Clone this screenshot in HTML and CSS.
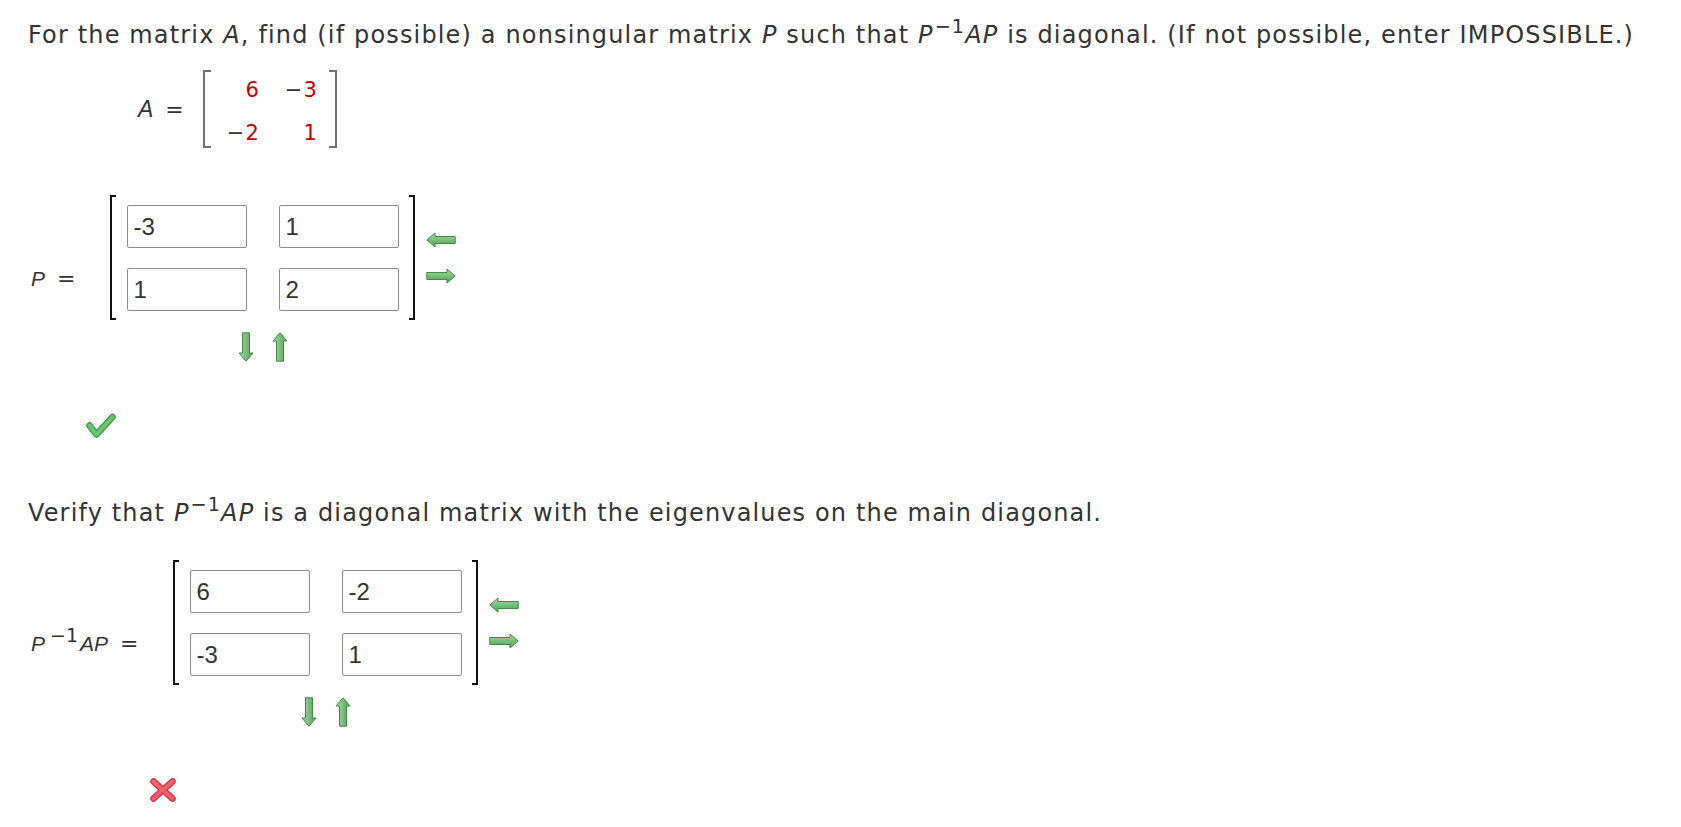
FILE: index.html
```html
<!DOCTYPE html>
<html>
<head>
<meta charset="utf-8">
<link rel="stylesheet" href="styles.css">
</head>
<body>
<div class="page">
  <p class="line intro">For the matrix <span class="mi">A</span>, find (if possible) a nonsingular matrix <span class="mi">P</span> such that <span class="mi">P</span><span class="sup">−1</span><span class="mi">AP</span> is diagonal. (If not possible, enter IMPOSSIBLE.)</p>

  <div class="given">
    <div class="glabel"><span class="lmi">A</span><span class="eq">=</span></div>
    <div class="amat">
      <span class="abrk abrk-l"></span>
      <div class="agrid">
        <span class="ae">6</span><span class="ae"><span class="neg">−</span>3</span>
        <span class="ae"><span class="neg">−</span>2</span><span class="ae">1</span>
      </div>
      <span class="abrk abrk-r"></span>
    </div>
  </div>

  <section class="answer ans-p">
    <div class="mlabel"><span class="lmi">P</span><span class="eq">=</span></div>
    <div class="mat">
      <span class="brk brk-l"></span>
      <div class="mgrid">
        <input class="cell" type="text" value="-3" readonly>
        <input class="cell" type="text" value="1" readonly>
        <input class="cell" type="text" value="1" readonly>
        <input class="cell" type="text" value="2" readonly>
      </div>
      <span class="brk brk-r"></span>
    </div>
    <div class="row-ops">
      <svg class="harrow" width="30" height="16" viewBox="0 0 30 16"><defs><linearGradient id="gh1" x1="0" y1="0" x2="0" y2="1"><stop offset="0" stop-color="#a6dca6"/><stop offset="1" stop-color="#4f9f52"/></linearGradient></defs><path d="M0.8 8 L9 1 L9 4.5 L29.2 4.5 L29.2 11.5 L9 11.5 L9 15 Z" fill="url(#gh1)" stroke="#3f8a44" stroke-width="1"/></svg>
      <svg class="harrow" width="30" height="16" viewBox="0 0 30 16"><path d="M29.2 8 L21 1 L21 4.5 L0.8 4.5 L0.8 11.5 L21 11.5 L21 15 Z" fill="url(#gh1)" stroke="#3f8a44" stroke-width="1"/></svg>
    </div>
    <div class="col-ops">
      <svg class="varrow" width="16" height="30" viewBox="0 0 16 30"><defs><linearGradient id="gv1" x1="0" y1="0" x2="1" y2="0"><stop offset="0" stop-color="#a6dca6"/><stop offset="1" stop-color="#4f9f52"/></linearGradient></defs><path d="M8 29.2 L1 21 L4.5 21 L4.5 0.8 L11.5 0.8 L11.5 21 L15 21 Z" fill="url(#gv1)" stroke="#3f8a44" stroke-width="1"/></svg>
      <svg class="varrow" width="16" height="30" viewBox="0 0 16 30"><path d="M8 0.8 L1 9 L4.5 9 L4.5 29.2 L11.5 29.2 L11.5 9 L15 9 Z" fill="url(#gv1)" stroke="#3f8a44" stroke-width="1"/></svg>
    </div>
    <div class="mark mark-ok">
      <svg width="30" height="26" viewBox="0 0 30 26"><path d="M3.5 12.5 L10.5 21.5 L26.5 4" fill="none" stroke="#3f9a45" stroke-width="6.5" stroke-linecap="round" stroke-linejoin="round"/><path d="M3.5 12.5 L10.5 21.5 L26.5 4" fill="none" stroke="#6cc46f" stroke-width="4" stroke-linecap="round" stroke-linejoin="round"/></svg>
    </div>
  </section>

  <p class="line verify">Verify that <span class="mi">P</span><span class="sup">−1</span><span class="mi">AP</span> is a diagonal matrix with the eigenvalues on the main diagonal.</p>

  <section class="answer ans-d">
    <div class="mlabel"><span class="lmi">P</span><span class="lsup">−1</span><span class="lmi">AP</span><span class="eq">=</span></div>
    <div class="mat">
      <span class="brk brk-l"></span>
      <div class="mgrid">
        <input class="cell" type="text" value="6" readonly>
        <input class="cell" type="text" value="-2" readonly>
        <input class="cell" type="text" value="-3" readonly>
        <input class="cell" type="text" value="1" readonly>
      </div>
      <span class="brk brk-r"></span>
    </div>
    <div class="row-ops">
      <svg class="harrow" width="30" height="16" viewBox="0 0 30 16"><path d="M0.8 8 L9 1 L9 4.5 L29.2 4.5 L29.2 11.5 L9 11.5 L9 15 Z" fill="url(#gh1)" stroke="#3f8a44" stroke-width="1"/></svg>
      <svg class="harrow" width="30" height="16" viewBox="0 0 30 16"><path d="M29.2 8 L21 1 L21 4.5 L0.8 4.5 L0.8 11.5 L21 11.5 L21 15 Z" fill="url(#gh1)" stroke="#3f8a44" stroke-width="1"/></svg>
    </div>
    <div class="col-ops">
      <svg class="varrow" width="16" height="30" viewBox="0 0 16 30"><path d="M8 29.2 L1 21 L4.5 21 L4.5 0.8 L11.5 0.8 L11.5 21 L15 21 Z" fill="url(#gv1)" stroke="#3f8a44" stroke-width="1"/></svg>
      <svg class="varrow" width="16" height="30" viewBox="0 0 16 30"><path d="M8 0.8 L1 9 L4.5 9 L4.5 29.2 L11.5 29.2 L11.5 9 L15 9 Z" fill="url(#gv1)" stroke="#3f8a44" stroke-width="1"/></svg>
    </div>
    <div class="mark mark-bad">
      <svg width="28" height="26" viewBox="0 0 28 26"><path d="M4.5 4.5 L23.5 21.5 M23.5 4.5 L4.5 21.5" fill="none" stroke="#d8343f" stroke-width="6.5" stroke-linecap="round"/><path d="M4.5 4.5 L23.5 21.5 M23.5 4.5 L4.5 21.5" fill="none" stroke="#f0606a" stroke-width="4" stroke-linecap="round"/></svg>
    </div>
  </section>
</div>
</body>
</html>
```

FILE: styles.css
```css
html, body {
  margin: 0;
  padding: 0;
  background: #ffffff;
}

.page {
  padding: 21px 0 0 28px;
  font-family: "DejaVu Sans", Verdana, sans-serif;
  color: #333333;
}

.line {
  margin: 0;
  font-size: 24px;
  line-height: 28px;
  letter-spacing: 1.15px;
  white-space: nowrap;
}

.mi {
  font-style: oblique;
}

.sup {
  font-size: 0.8em;
  position: relative;
  top: -0.5em;
  line-height: 0;
  margin-left: 1px;
}

/* Given matrix A */
.given {
  display: flex;
  align-items: center;
  margin-top: 21px;
  margin-left: 110px;
}

.glabel {
  display: flex;
  align-items: center;
  font-family: "Liberation Sans", Arial, sans-serif;
  font-size: 23px;
  color: #333333;
  margin-right: 19px;
}

.lmi {
  font-style: italic;
}

.eq {
  margin-left: 12px;
  font-family: "DejaVu Sans", Verdana, sans-serif;
  font-size: 22px;
  font-style: normal;
}

.amat {
  display: flex;
  align-items: stretch;
  height: 78px;
}

.abrk {
  width: 6px;
  border: 2px solid #707070;
}

.abrk-l { border-right: none; }
.abrk-r { border-left: none; }

.agrid {
  display: grid;
  grid-template-columns: 40px 40px;
  grid-auto-rows: 30px;
  column-gap: 18px;
  row-gap: 13px;
  padding: 5px 12px 0 8px;
  font-family: "DejaVu Sans", Verdana, sans-serif;
  font-size: 21px;
  line-height: 30px;
  color: #cc0000;
}

.ae {
  text-align: right;
}

.neg {
  color: #333333;
  margin-right: 1px;
}

/* Answer matrices */
.answer {
  display: grid;
  grid-template-columns: auto auto auto 1fr;
  align-items: center;
}

.ans-p { margin-top: 47px; }
.ans-d { margin-top: 33px; }

.mlabel {
  grid-row: 1 / 3;
  grid-column: 1;
  align-self: center;
  display: flex;
  align-items: baseline;
  font-family: "Liberation Sans", Arial, sans-serif;
  font-size: 21px;
  color: #333333;
  padding-left: 3px;
  margin-right: 35px;
}

.lsup {
  font-family: "DejaVu Sans", Verdana, sans-serif;
  font-size: 19px;
  position: relative;
  top: -0.5em;
  margin-left: 5px;
  margin-right: 2px;
}

.mat {
  grid-row: 1;
  grid-column: 2;
  display: flex;
  align-items: stretch;
}

.brk {
  width: 4px;
  border: 2px solid #111111;
}

.brk-l { border-right: none; }
.brk-r { border-left: none; }

.mgrid {
  display: grid;
  grid-template-columns: 120px 120px;
  column-gap: 32px;
  row-gap: 20px;
  padding: 10px 10px 9px 11px;
}

.cell {
  box-sizing: border-box;
  width: 120px;
  height: 43px;
  margin: 0;
  padding: 0 5px;
  border: 1px solid #8c8c8c;
  border-radius: 2px;
  font-family: "Liberation Sans", Arial, sans-serif;
  font-size: 24px;
  color: #333333;
  background: #ffffff;
  outline: none;
}

.row-ops {
  grid-row: 1;
  grid-column: 3;
  display: flex;
  flex-direction: column;
  align-items: flex-start;
  gap: 20px;
  margin-left: 11px;
}

.harrow, .varrow {
  display: block;
}

.col-ops {
  grid-row: 2;
  grid-column: 2;
  justify-self: center;
  display: flex;
  gap: 18px;
  margin-top: 12px;
}

.mark {
  grid-row: 3;
  grid-column: 1 / -1;
}

.mark svg { display: block; }

.ans-p .mark-ok {
  margin-top: 51px;
  margin-left: 58px;
}

.ans-d .mark-bad {
  margin-top: 50px;
  margin-left: 121px;
}

.verify {
  margin-top: 60px;
}
```
